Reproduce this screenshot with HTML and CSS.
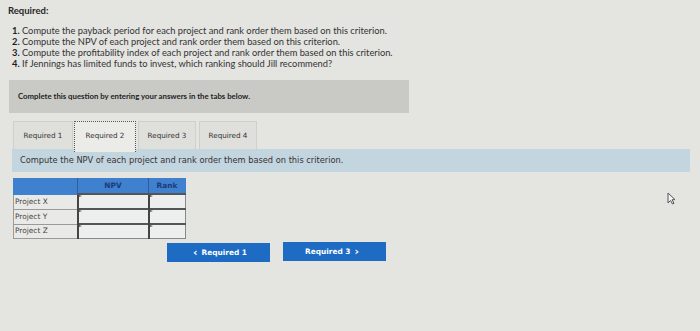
FILE: index.html
```html
<!DOCTYPE html>
<html>
<head>
<meta charset="utf-8">
<link rel="stylesheet" href="styles.css">
</head>
<body>
<div class="page">
  <div class="req-title">Required:</div>
  <ol class="req-list">
    <li><b>1.</b> Compute the payback period for each project and rank order them based on this criterion.</li>
    <li><b>2.</b> Compute the NPV of each project and rank order them based on this criterion.</li>
    <li><b>3.</b> Compute the profitability index of each project and rank order them based on this criterion.</li>
    <li><b>4.</b> If Jennings has limited funds to invest, which ranking should Jill recommend?</li>
  </ol>
  <div class="instructions">Complete this question by entering your answers in the tabs below.</div>
  <div class="tabs">
    <div class="tab">Required 1</div>
    <div class="tab active">Required 2</div>
    <div class="tab">Required 3</div>
    <div class="tab">Required 4</div>
  </div>
  <div class="prompt">Compute the NPV of each project and rank order them based on this criterion.</div>
  <table class="grid">
    <tr class="head"><th class="lbl"></th><th class="npv">NPV</th><th class="rank">Rank</th></tr>
    <tr><td class="lbl">Project X</td><td class="in"></td><td class="in"></td></tr>
    <tr><td class="lbl">Project Y</td><td class="in"></td><td class="in"></td></tr>
    <tr><td class="lbl">Project Z</td><td class="in"></td><td class="in"></td></tr>
  </table>
  <div class="nav">
    <div class="btn prev"><span class="chev">&lsaquo;</span> Required 1</div>
    <div class="btn next">Required 3 <span class="chev">&rsaquo;</span></div>
  </div>
</div>
<svg class="cursor" width="9" height="13" viewBox="0 0 9 13">
  <path d="M1 1 L1 11 L3.5 8.5 L5.5 12 L7 11.3 L5 7.8 L8 7.6 Z" fill="#f4f4f4" stroke="#555" stroke-width="1"/>
</svg>
</body>
</html>
```
FILE: styles.css
```css
html, body {
  margin: 0;
  padding: 0;
  background: #e4e4e1;
  width: 700px;
  height: 331px;
  overflow: hidden;
}
.page {
  padding: 5px 0 0 8px;
  font-family: Lato, "Open Sans", sans-serif;
  color: #262626;
}
.req-title {
  font-weight: bold;
  font-size: 9.5px;
  line-height: 12px;
}
.req-list {
  list-style: none;
  margin: 8px 0 0 4px;
  padding: 0;
  font-size: 9.3px;
  line-height: 11px;
  color: #333;
}
.req-list b { color: #1d1d1d; }
.instructions {
  margin: 11px 0 0 1px;
  width: 391px;
  height: 33px;
  background: #c9c9c6;
  padding-left: 9px;
  font-family: Lato, sans-serif;
  font-weight: bold;
  font-size: 7.8px;
  line-height: 33px;
  color: #222;
}
.tabs {
  display: flex;
  margin: 8px 0 0 5px;
  height: 28px;
  gap: 1px;
}
.tab {
  width: 58px;
  height: 27px;
  border: 1px solid #cfcfcc;
  border-bottom: none;
  background: #dfdfdc;
  font-family: "DejaVu Sans", sans-serif;
  font-size: 7.2px;
  color: #333;
  text-align: center;
  line-height: 27px;
}
.tab:nth-child(2) { width: 60px; }
.tab:nth-child(3) { margin-left: 1px; width: 56px; }
.tab:nth-child(4) { margin-left: 2px; width: 56px; }
.tab.active {
  background: #ebebe8;
  border: 1px dotted #555;
  border-bottom: none;
  height: 30px;
  position: relative;
  z-index: 1;
}
.prompt {
  margin-left: 4px;
  width: 670px;
  height: 23px;
  background: #c3d5df;
  padding-left: 8px;
  font-family: "DejaVu Sans", sans-serif;
  font-size: 8.25px;
  line-height: 23px;
  color: #333;
}
.grid {
  margin: 6px 0 0 5px;
  border-collapse: collapse;
  font-family: "DejaVu Sans", sans-serif;
  font-size: 7.4px;
}
.grid th, .grid td {
  padding: 0;
  height: 13px;
  line-height: 12px;
  border: 1px solid #7a7a7a;
}
.grid .head th {
  background: #3f80cf;
  color: #1d3c78;
  font-weight: bold;
  border-color: #3f80cf;
  border-right: 1px solid #2f5e98;
  height: 14px;
}
.grid .head th.rank { border-right-color: #3f80cf; }
.grid th.lbl { width: 63px; }
.grid th.npv { width: 70px; }
.grid th.rank { width: 36px; }
.grid td.lbl {
  background: #e9e9e7;
  color: #444;
  text-align: left;
  padding-left: 1px;
  border-color: #9a9a9a;
}
.grid td.in {
  background: #edeeee;
  border: 1px solid #888;
  border-top: 2px solid #555;
  border-left: 2px solid #444;
  position: relative;
}
.grid td.in::before {
  content: "";
  position: absolute;
  left: 0;
  top: 0;
  border-left: 3px solid #555;
  border-top: 1.5px solid transparent;
  border-bottom: 1.5px solid transparent;
}
.nav {
  display: flex;
  gap: 13px;
  margin: 4px 0 0 159px;
}
.btn {
  width: 81px;
  height: 19px;
  background: #1e6bc4;
  color: #fff;
  font-family: "DejaVu Sans", sans-serif;
  font-weight: bold;
  font-size: 7.4px;
  display: flex;
  align-items: center;
  justify-content: flex-start;
  padding-left: 22px;
}
.btn.next { margin-top: -1px; }
.chev { font-size: 11px; font-weight: bold; margin: 0 4px; line-height: 10px; }
.cursor {
  position: absolute;
  left: 667px;
  top: 192px;
}
```
